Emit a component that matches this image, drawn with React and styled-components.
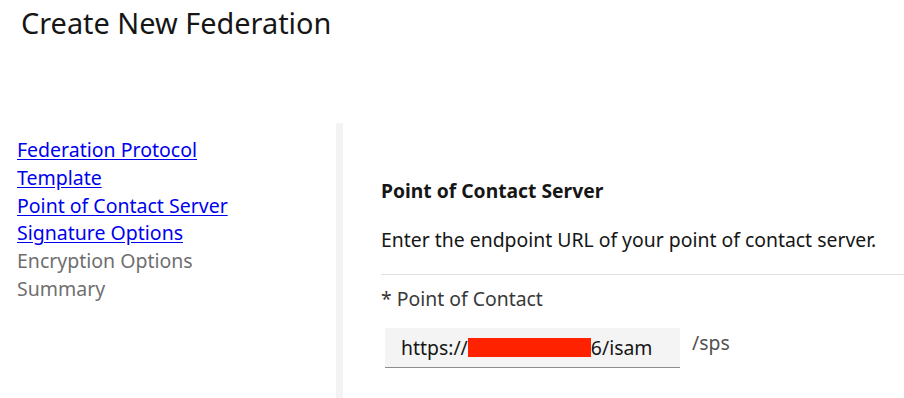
import React from "react";
import styled, { createGlobalStyle } from "styled-components";

const Global = createGlobalStyle`
  html, body { margin: 0; padding: 0; background: #ffffff; }
  body { font-family: "Noto Sans", "Open Sans", sans-serif; color: #161616; }
`;

const Page = styled.div`
  width: 904px;
  height: 398px;
  overflow: hidden;
  display: flex;
  flex-direction: column;
`;

const Title = styled.h1`
  margin: 0;
  padding: 4px 0 0 21px;
  font-size: 28.9px;
  font-weight: 400;
  line-height: 38px;
  color: #161616;
`;

const Body = styled.div`
  display: flex;
  margin-top: 81px;
  flex: 1;
`;

const Nav = styled.nav`
  width: 319px;
  padding: 13px 0 0 17px;
  display: flex;
  flex-direction: column;
`;

const NavItem = styled.a`
  font-size: 19.5px;
  line-height: 27.8px;
  color: ${(p) => (p.$link ? "#0000ee" : "#6f6f6f")};
  text-decoration: ${(p) => (p.$link ? "underline" : "none")};
  text-underline-offset: 2px;
  width: fit-content;
`;

const Divider = styled.div`
  width: 7px;
  background: #f3f3f3;
`;

const Content = styled.section`
  flex: 1;
  padding: 56px 0 0 38px;
  display: flex;
  flex-direction: column;
`;

const Heading = styled.h2`
  margin: 0;
  font-size: 19.3px;
  font-weight: 700;
  line-height: 24px;
  color: #161616;
`;

const Description = styled.p`
  margin: 25px 0 0;
  font-size: 19.4px;
  line-height: 24px;
  color: #161616;
  padding-bottom: 22px;
  border-bottom: 1px solid #e0e0e0;
`;

const Label = styled.label`
  margin-top: 12px;
  font-size: 19.4px;
  line-height: 24px;
  color: #393939;
`;

const FieldRow = styled.div`
  display: flex;
  align-items: flex-start;
  margin-top: 17px;
  margin-left: 4px;
`;

const Field = styled.div`
  width: 279px;
  height: 39px;
  padding-left: 16px;
  background: #f4f4f4;
  border-bottom: 1px solid #8d8d8d;
  display: flex;
  align-items: center;
  font-size: 19.4px;
  color: #161616;
  white-space: nowrap;
  overflow: hidden;
`;

const Redaction = styled.span`
  display: inline-block;
  width: 123px;
  height: 19px;
  background: #ff2200;
`;

const Suffix = styled.span`
  margin-left: 12px;
  margin-top: 3px;
  font-size: 19.4px;
  line-height: 24px;
  color: #525252;
`;

const items = [
  ["Federation Protocol", true],
  ["Template", true],
  ["Point of Contact Server", true],
  ["Signature Options", true],
  ["Encryption Options", false],
  ["Summary", false],
];

export default function App() {
  return (
    <Page>
      <Global />
      <Title>Create New Federation</Title>
      <Body>
        <Nav>
          {items.map(([t, l]) => (
            <NavItem key={t} $link={l} href={l ? "#" : undefined}>
              {t}
            </NavItem>
          ))}
        </Nav>
        <Divider />
        <Content>
          <Heading>Point of Contact Server</Heading>
          <Description>Enter the endpoint URL of your point of contact server.</Description>
          <Label>* Point of Contact</Label>
          <FieldRow>
            <Field>
              https://<Redaction />6/isam
            </Field>
            <Suffix>/sps</Suffix>
          </FieldRow>
        </Content>
      </Body>
    </Page>
  );
}
